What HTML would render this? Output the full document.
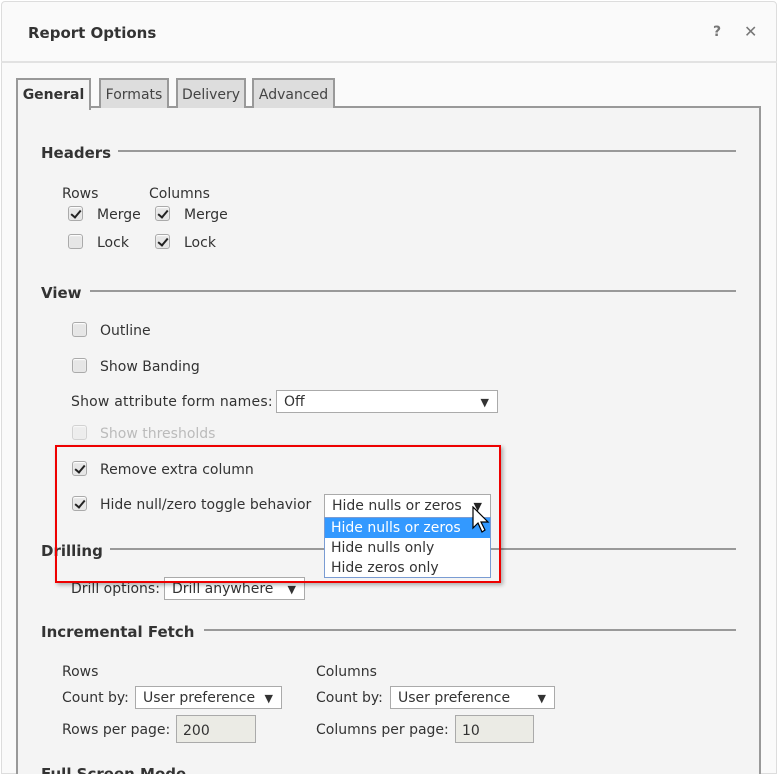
<!DOCTYPE html>
<html style="overflow:hidden;width:778px;height:774px"><head><meta charset="utf-8"><style>
*{margin:0;padding:0;box-sizing:border-box}
body{width:778px;height:774px;overflow:hidden;background:#fff;font-family:"DejaVu Sans","Liberation Sans",sans-serif;font-size:14px;color:#333;position:relative}
.a{position:absolute;white-space:nowrap;line-height:18px;margin-top:1px}
.b{font-weight:bold;color:#333}
.cb{position:absolute;width:15px;height:15px;border:1px solid #aaa;border-radius:3px;background:#e6e6e6;box-shadow:inset 0 1px 1px #fff}
.cb.c::after{content:"";position:absolute;left:4px;top:1px;width:4px;height:8px;border:solid #222;border-width:0 2px 2px 0;transform:rotate(40deg)}
.cb.d{opacity:.45}
.line{position:absolute;height:2px;background:#999}
.sel{position:absolute;height:23px;border:1px solid #aaa;background:#fff;line-height:23px;padding-left:7px;white-space:nowrap}
.sel .ar{position:absolute;right:8px;top:0;font-size:11px}
.tab{position:absolute;top:78px;height:30px;border:2px solid #999;border-bottom:none;background:#ddd;line-height:30px;text-align:center;color:#444}
.inp{position:absolute;height:28px;border:1px solid #aaa;background:#ebebe5;line-height:30px;padding-left:6px}
</style></head><body>
<div style="position:absolute;left:1px;top:1px;width:776px;height:773px;border:1px solid #ddd;border-radius:4px 4px 0 0;background:#fafafa"></div>
<div style="position:absolute;left:1px;top:61px;width:776px;height:2px;background:#e2e2e2"></div>
<div class="a b" style="left:28px;top:23px;font-size:15px">Report Options</div>
<div class="a b" style="left:713px;top:22px;color:#777;font-size:14px">?</div>
<div class="a b" style="left:744px;top:22px;color:#777;font-size:16px">✕</div>
<div style="position:absolute;left:16px;top:106px;width:745px;height:670px;border:2px solid #999;border-bottom:none;background:#f4f4f4"></div>
<div class="tab" style="left:16px;width:75px;background:#f4f4f4;height:32px;font-weight:bold;color:#333">General</div>
<div class="tab" style="left:99px;width:70px">Formats</div>
<div class="tab" style="left:176px;width:70px">Delivery</div>
<div class="tab" style="left:252px;width:83px">Advanced</div>

<div class="a b" style="left:41px;top:143px;font-size:15px">Headers</div><div class="line" style="left:118px;top:150px;width:618px"></div>
<div class="a" style="left:62px;top:184px">Rows</div><div class="a" style="left:149px;top:184px">Columns</div>
<div class="cb c" style="left:68px;top:206px"></div><div class="a" style="left:97px;top:205px">Merge</div>
<div class="cb c" style="left:155px;top:206px"></div><div class="a" style="left:184px;top:205px">Merge</div>
<div class="cb" style="left:68px;top:234px"></div><div class="a" style="left:97px;top:233px">Lock</div>
<div class="cb c" style="left:155px;top:234px"></div><div class="a" style="left:184px;top:233px">Lock</div>

<div class="a b" style="left:41px;top:283px;font-size:15px">View</div><div class="line" style="left:90px;top:290px;width:646px"></div>
<div class="cb" style="left:72px;top:322px"></div><div class="a" style="left:100px;top:321px">Outline</div>
<div class="cb" style="left:72px;top:358px"></div><div class="a" style="left:100px;top:357px">Show Banding</div>
<div class="a" style="left:71px;top:392px;letter-spacing:0.2px">Show attribute form names:</div>
<div class="sel" style="left:276px;top:390px;width:222px">Off<span class="ar">▼</span></div>
<div class="cb d" style="left:72px;top:425px"></div><div class="a" style="left:100px;top:424px;color:#bbb">Show thresholds</div>
<div class="cb c" style="left:72px;top:461px"></div><div class="a" style="left:100px;top:460px">Remove extra column</div>
<div class="cb c" style="left:72px;top:496px"></div><div class="a" style="left:100px;top:495px">Hide null/zero toggle behavior</div>

<div class="a b" style="left:41px;top:541px;font-size:15px">Drilling</div><div class="line" style="left:110px;top:548px;width:626px"></div>
<div class="a" style="left:71px;top:579px">Drill options:</div>
<div class="sel" style="left:164px;top:577px;width:141px">Drill anywhere<span class="ar">▼</span></div>

<div class="sel" style="left:324px;top:494px;width:167px;height:24px">Hide nulls or zeros<span class="ar" style="color:#222">▼</span></div>
<div style="position:absolute;left:324px;top:517px;width:167px;height:61px;border:1px solid #7a9cd3;background:#fff">
<div style="background:#3399ff;color:#fff;height:20px;line-height:20px;padding-left:6px">Hide nulls or zeros</div>
<div style="height:20px;line-height:20px;padding-left:6px">Hide nulls only</div>
<div style="height:20px;line-height:20px;padding-left:6px">Hide zeros only</div>
</div>
<svg style="position:absolute;left:471px;top:506px" width="20" height="28" viewBox="0 0 20 28"><path d="M2 1 L2 22 L7 17 L11 26 L14 24 L10 16 L17 16 Z" fill="#fff" stroke="#000" stroke-width="1.2"/></svg>
<div style="position:absolute;left:55px;top:445px;width:446px;height:138px;border:2px solid #e00;box-shadow:2px 2px 4px rgba(0,0,0,.3)"></div>

<div class="a b" style="left:41px;top:622px;font-size:15px">Incremental Fetch</div><div class="line" style="left:204px;top:629px;width:532px"></div>
<div class="a" style="left:62px;top:662px">Rows</div><div class="a" style="left:316px;top:662px">Columns</div>
<div class="a" style="left:62px;top:688px">Count by:</div>
<div class="sel" style="left:135px;top:686px;width:147px">User preference<span class="ar">▼</span></div>
<div class="a" style="left:316px;top:688px">Count by:</div>
<div class="sel" style="left:390px;top:686px;width:165px">User preference<span class="ar">▼</span></div>
<div class="a" style="left:62px;top:720px">Rows per page:</div>
<div class="inp" style="left:176px;top:715px;width:80px">200</div>
<div class="a" style="left:316px;top:720px">Columns per page:</div>
<div class="inp" style="left:455px;top:715px;width:79px">10</div>
<div class="a b" style="left:41px;top:764px;font-size:15px">Full Screen Mode</div>
</body></html>
